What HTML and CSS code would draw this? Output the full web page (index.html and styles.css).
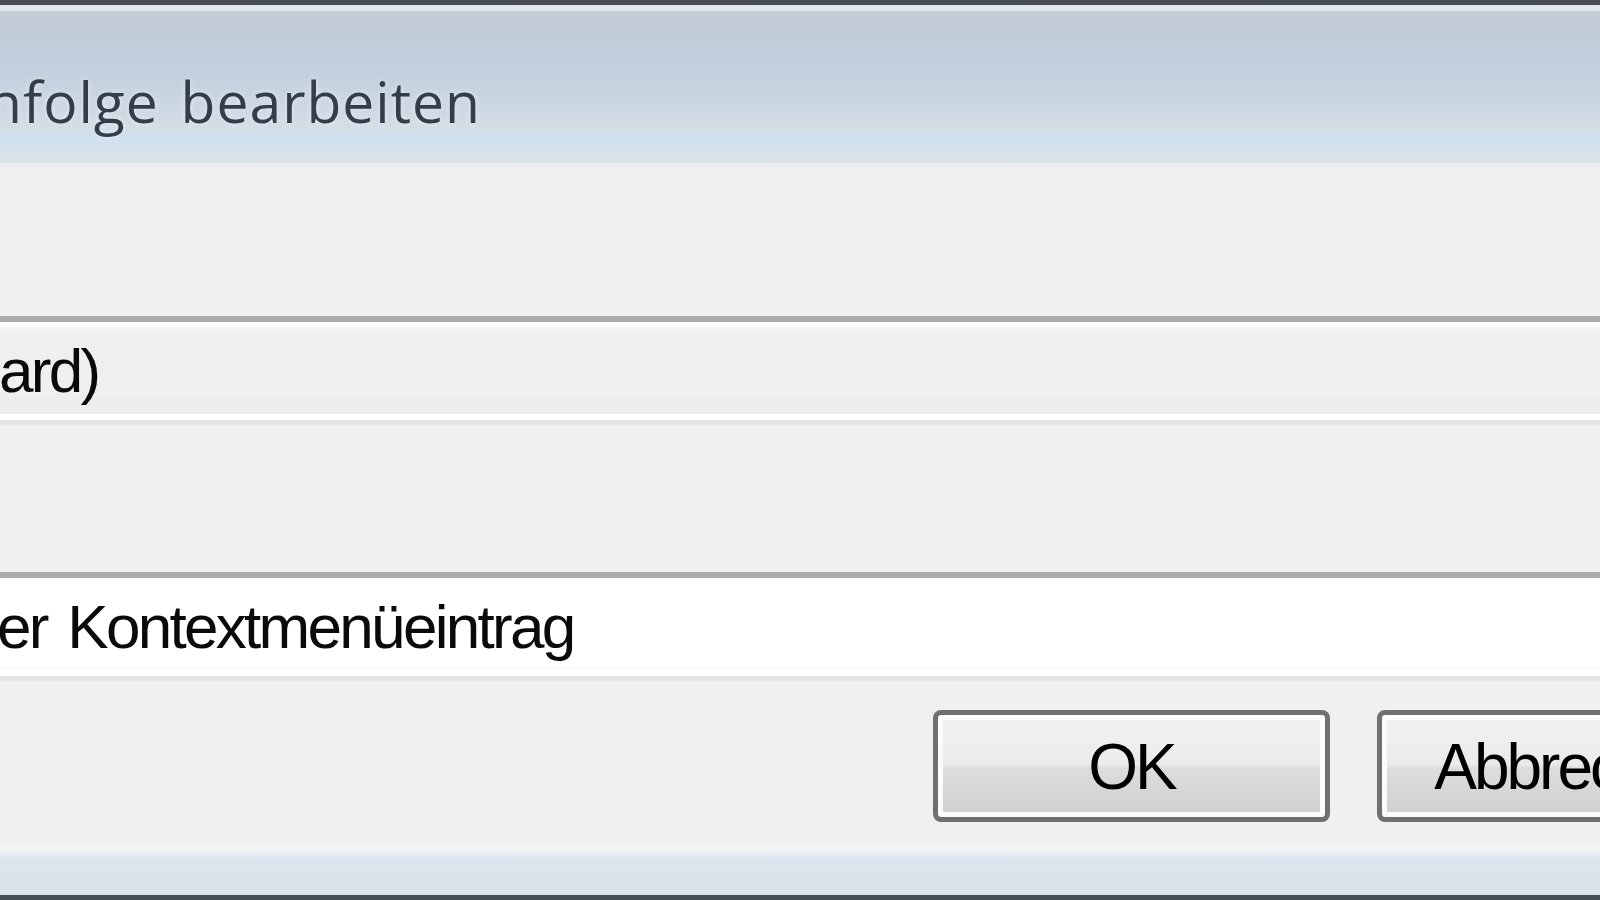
FILE: index.html
```html
<!DOCTYPE html>
<html lang="de">
<head>
<meta charset="utf-8">
<title>Zeichenfolge bearbeiten</title>
<link rel="stylesheet" href="styles.css">
</head>
<body>
<div class="dialog">
  <div class="frame-top"></div>
  <div class="titlebar">
    <span class="title">nfolge bearbeiten</span>
  </div>
  <div class="content">
    <div class="field field-readonly"><span class="field-text name-text">ard)</span></div>
    <div class="field field-value"><span class="field-text value-text">er Kontextmenüeintrag</span></div>
    <div class="buttons">
      <div class="btn">OK</div>
      <div class="btn">Abbrechen</div>
    </div>
  </div>
  <div class="footer"></div>
  <div class="frame-bottom"></div>
</div>
</body>
</html>
```

FILE: styles.css
```css
html, body {
  margin: 0;
  padding: 0;
  width: 1600px;
  height: 900px;
  overflow: hidden;
  background: #f0f0f0;
}

.dialog {
  display: flex;
  flex-direction: column;
  width: 1600px;
  height: 900px;
  overflow: hidden;
  background: #f0f0f0;
}

.frame-top {
  height: 5px;
  flex: none;
  background: #464c54;
}

.titlebar {
  flex: none;
  height: 158px;
  box-sizing: border-box;
  border-top: 6px solid #e0e6ea;
  padding-top: 51px;
  background: linear-gradient(to bottom,
    #c6cdd4 0px,
    #c0ccd8 20px,
    #c3d0dd 60px,
    #cbd7e2 95px,
    #d5dde5 115px,
    #cfe0ee 128px,
    #d3e2ed 136px,
    #d9e2e9 144px,
    #dbe3e9 152px);
  white-space: nowrap;
  overflow: hidden;
}

.title {
  display: block;
  font-family: "Open Sans", "Liberation Sans", sans-serif;
  font-size: 57px;
  line-height: 78px;
  letter-spacing: 1px;
  word-spacing: 6px;
  color: #333e4a;
  text-indent: -13px;
  text-shadow: 0 0 6px rgba(235, 242, 248, 0.7);
}

.content {
  flex: 1;
  display: flex;
  flex-direction: column;
  padding-top: 153px;
  background: linear-gradient(to bottom, #e9eded 0px, #f0f0f0 8px);
}

.field {
  flex: none;
  height: 92px;
  border-top: 6px solid #acacac;
  border-bottom: 6px solid #ffffff;
  box-shadow: 0 5px 0 #e4e4e4;
  overflow: hidden;
  white-space: nowrap;
}

.field-readonly {
  background: linear-gradient(to bottom,
    #ffffff 0px, #ffffff 5px,
    #f3f3f3 5px, #f3f3f3 12px,
    #efefef 12px, #f0f0f0 70px,
    #ececec 80px, #eeeeee 92px);
}

.field-value {
  margin-top: 152px;
  background: linear-gradient(to bottom, #ffffff 0px, #ffffff 86px, #f9f9f9 92px);
}

.field-text {
  display: block;
  font-family: "Liberation Sans", Arial, sans-serif;
  font-size: 62px;
  line-height: 97px;
  letter-spacing: -2.7px;
  color: #0a0a0a;
}

.name-text {
  text-indent: -1px;
}

.value-text {
  text-indent: -3px;
  word-spacing: 6px;
}

.buttons {
  display: flex;
  gap: 47px;
  margin-top: 34px;
  padding-left: 933px;
  white-space: nowrap;
}

.btn {
  flex: none;
  width: 397px;
  height: 112px;
  box-sizing: border-box;
  border: 5px solid #707070;
  border-radius: 8px;
  padding-top: 2px;
  background: linear-gradient(to bottom,
    #f2f2f2 0%, #ebebeb 48%,
    #dddddd 52%, #cfcfcf 100%);
  box-shadow: inset 0 0 0 5px #fbfbfb;
  font-family: "Liberation Sans", Arial, sans-serif;
  font-size: 64px;
  line-height: 100px;
  letter-spacing: -3px;
  text-align: center;
  color: #000000;
}

.footer {
  flex: none;
  height: 55px;
  background: linear-gradient(to bottom,
    #f0f0f0 0px,
    #f3f5f6 8px,
    #eef2f5 12px,
    #e0e8ef 16px,
    #dae5ee 22px,
    #d9e3ec 55px);
}

.frame-bottom {
  flex: none;
  height: 5px;
  background: #464c54;
}
```
